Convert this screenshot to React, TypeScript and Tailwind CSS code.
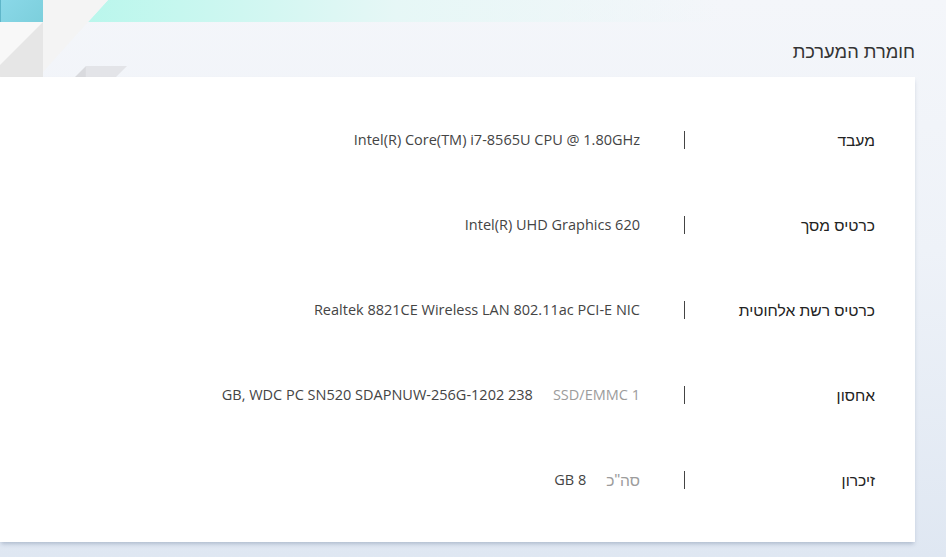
import React from 'react';

interface HardwareRow {
  label: string;
  hint?: string;
  hebrewHint?: boolean;
  value: string;
}

const rows: HardwareRow[] = [
  { label: 'מעבד', value: 'Intel(R) Core(TM) i7-8565U CPU @ 1.80GHz' },
  { label: 'כרטיס מסך', value: 'Intel(R) UHD Graphics 620' },
  { label: 'כרטיס רשת אלחוטית', value: 'Realtek 8821CE Wireless LAN 802.11ac PCI-E NIC' },
  { label: 'אחסון', hint: '1 SSD/EMMC', value: '238 GB, WDC PC SN520 SDAPNUW-256G-1202' },
  { label: 'זיכרון', hint: 'סה"כ', hebrewHint: true, value: '8 GB' },
];

function Decorations() {
  return (
    <div className="pointer-events-none absolute inset-0">
      {/* teal strip */}
      <div className="absolute left-0 top-0 h-[22px] w-[720px] bg-[linear-gradient(90deg,#aef6e9_0%,#c6f7ef_25%,#e6f7f6_55%,rgba(243,246,250,0)_100%)] [clip-path:polygon(108px_0,100%_0,100%_100%,88px_100%)]" />
      {/* gray block behind the strip */}
      <div className="absolute left-[43px] top-0 h-[77px] w-[66px] bg-[#f4f4f4] [clip-path:polygon(0_0,65px_0,45px_22px,0_72px)]" />
      {/* blue square */}
      <div className="absolute left-0 top-0 h-[22px] w-[43px] border-l border-[#5fb6c9] bg-[linear-gradient(135deg,#8ad8e8,#7ccfdc)]" />
      {/* corner triangles */}
      <div className="absolute left-0 top-[22px] h-[55px] w-[43px] bg-[#f8f8f8]" />
      <div className="absolute left-0 top-[22px] h-[55px] w-[43px] bg-[#e6e6e6] [clip-path:polygon(100%_0,100%_100%,0_100%,0_43px)]" />
      {/* small parallelogram */}
      <div className="absolute left-[75px] top-[66px] h-[11px] w-[52px] bg-[linear-gradient(90deg,#d9dade_0%,#d9dade_20%,#e3e4e8_21%,#e3e4e8_100%)] [clip-path:polygon(11px_0,100%_0,41px_100%,0_100%)]" />
    </div>
  );
}

export default function App() {
  return (
    <div
      dir="rtl"
      className="relative h-[557px] w-full overflow-hidden bg-[linear-gradient(180deg,#f4f6fa_0%,#eef2f8_45%,#dfe7f2_100%)] font-['Open_Sans','Noto_Sans','Liberation_Sans',sans-serif]"
    >
      <Decorations />
      <div className="relative pl-0 pr-[31px] pt-[41px]">
        <h1 className="h-[36px] font-['Liberation_Sans',sans-serif] text-[18.3px] leading-[22px] text-[#333]">
          חומרת המערכת
        </h1>
        <div className="bg-white py-5 pr-[40px] shadow-[0_3px_4px_-1px_rgba(90,110,140,0.35)]">
          {rows.map((row) => (
            <div key={row.label} className="flex h-[85px] items-center">
              <div className="w-[190px] pt-[2px] font-['Liberation_Sans',sans-serif] text-[15.6px] text-[#222]">
                {row.label}
              </div>
              <div className="h-[18px] w-px bg-[#444]" />
              <div className="mr-[44px] flex items-center gap-5 text-[14.5px] text-[#444]">
                {row.hint && (
                  <span
                    className={
                      row.hebrewHint
                        ? "pt-[2px] font-['Liberation_Sans',sans-serif] text-[15.6px] text-[#9c9c9c]"
                        : 'text-[#9c9c9c]'
                    }
                  >
                    {row.hint}
                  </span>
                )}
                <span>{row.value}</span>
              </div>
            </div>
          ))}
        </div>
      </div>
    </div>
  );
}
